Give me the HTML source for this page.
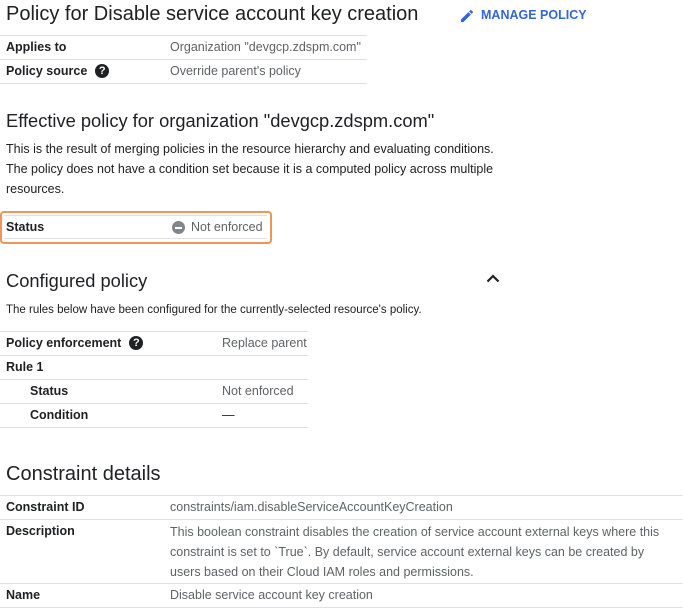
<!DOCTYPE html>
<html><head><style>
body{margin:0;width:687px;height:613px;background:#fff;font-family:"Liberation Sans",Arial,sans-serif;color:#202124;position:relative;overflow:hidden}
.a{position:absolute;white-space:nowrap}
.h1{font-size:20px}
.h2{font-size:18.3px}
.b{font-size:12.5px}
.lb{font-size:12.5px;font-weight:bold}
.v{font-size:12.5px;color:#5f6368}
.ln{position:absolute;height:1px;background:#e0e0e0}
.q{display:inline-block;width:14px;height:14px;border-radius:50%;background:#202124;color:#fff;font-size:11px;font-weight:bold;text-align:center;line-height:14px;vertical-align:top;margin-left:8px;position:relative;top:0px}
</style></head><body>
<div class="a h1" style="left:6px;top:3px">Policy for Disable service account key creation</div>
<svg class="a" style="left:459px;top:8px" width="16" height="16" viewBox="0 0 24 24"><path fill="#3367d6" d="M3 17.25V21h3.75L17.81 9.94l-3.75-3.75L3 17.25zM20.71 7.04a1 1 0 000-1.41l-2.34-2.34a1 1 0 00-1.41 0l-1.83 1.83 3.75 3.75 1.83-1.83z"/></svg>
<div class="a" style="left:481px;top:8px;font-size:12.5px;font-weight:bold;color:#3367d6">MANAGE POLICY</div>
<div class="ln" style="left:0;top:35px;width:367px"></div>
<div class="a lb" style="left:6px;top:40px">Applies to</div>
<div class="a v" style="left:170px;top:40px">Organization "devgcp.zdspm.com"</div>
<div class="ln" style="left:0;top:59px;width:367px"></div>
<div class="a lb" style="left:6px;top:64px">Policy source<span class="q">?</span></div>
<div class="a v" style="left:170px;top:64px">Override parent's policy</div>
<div class="ln" style="left:0;top:83px;width:367px"></div>
<div class="a h2" style="left:6px;top:110px">Effective policy for organization "devgcp.zdspm.com"</div>
<div class="a b" style="left:6px;top:139px;line-height:20px;white-space:normal;width:505px">This is the result of merging policies in the resource hierarchy and evaluating conditions. The policy does not have a condition set because it is a computed policy across multiple resources.</div>
<div class="a" style="left:0;top:211px;width:268px;height:29px;border:2px solid #f0955a;border-radius:4px"></div>
<div class="ln" style="left:4px;top:215px;width:263px"></div>
<div class="ln" style="left:4px;top:238px;width:263px"></div>
<div class="a lb" style="left:6px;top:220px">Status</div>
<div class="a" style="left:172px;top:221px;width:13px;height:13px;border-radius:50%;background:#80868b"><div style="position:absolute;left:3px;top:6px;width:7px;height:2px;background:#fff"></div></div>
<div class="a v" style="left:191px;top:220px">Not enforced</div>
<div class="a h2" style="left:6px;top:270px">Configured policy</div>
<svg class="a" style="left:486px;top:273px" width="14" height="10" viewBox="0 0 14 10"><path d="M1.5 8.5L7 3l5.5 5.5" stroke="#202124" stroke-width="2.2" fill="none"/></svg>
<div class="a" style="left:6px;top:304px;font-size:11.5px">The rules below have been configured for the currently-selected resource's policy.</div>
<div class="ln" style="left:0;top:331px;width:308px"></div>
<div class="a lb" style="left:6px;top:336px">Policy enforcement<span class="q">?</span></div>
<div class="a v" style="left:222px;top:336px">Replace parent</div>
<div class="ln" style="left:0;top:355px;width:308px"></div>
<div class="a lb" style="left:6px;top:360px">Rule 1</div>
<div class="ln" style="left:0;top:379px;width:308px"></div>
<div class="a lb" style="left:30px;top:384px">Status</div>
<div class="a v" style="left:222px;top:384px">Not enforced</div>
<div class="ln" style="left:0;top:403px;width:308px"></div>
<div class="a lb" style="left:30px;top:408px">Condition</div>
<div class="a b" style="left:222px;top:408px">—</div>
<div class="ln" style="left:0;top:427px;width:308px"></div>
<div class="a" style="left:6px;top:463px;font-size:20px">Constraint details</div>
<div class="ln" style="left:0;top:495px;width:683px"></div>
<div class="a lb" style="left:6px;top:500px">Constraint ID</div>
<div class="a v" style="left:170px;top:500px">constraints/iam.disableServiceAccountKeyCreation</div>
<div class="ln" style="left:0;top:519px;width:683px"></div>
<div class="a lb" style="left:6px;top:524px">Description</div>
<div class="a v" style="left:170px;top:522px;white-space:normal;width:505px;line-height:20px">This boolean constraint disables the creation of service account external keys where this constraint is set to `True`. By default, service account external keys can be created by users based on their Cloud IAM roles and permissions.</div>
<div class="ln" style="left:0;top:583px;width:683px"></div>
<div class="a lb" style="left:6px;top:588px">Name</div>
<div class="a v" style="left:170px;top:588px">Disable service account key creation</div>
<div class="ln" style="left:0;top:607px;width:683px"></div>
</body></html>
